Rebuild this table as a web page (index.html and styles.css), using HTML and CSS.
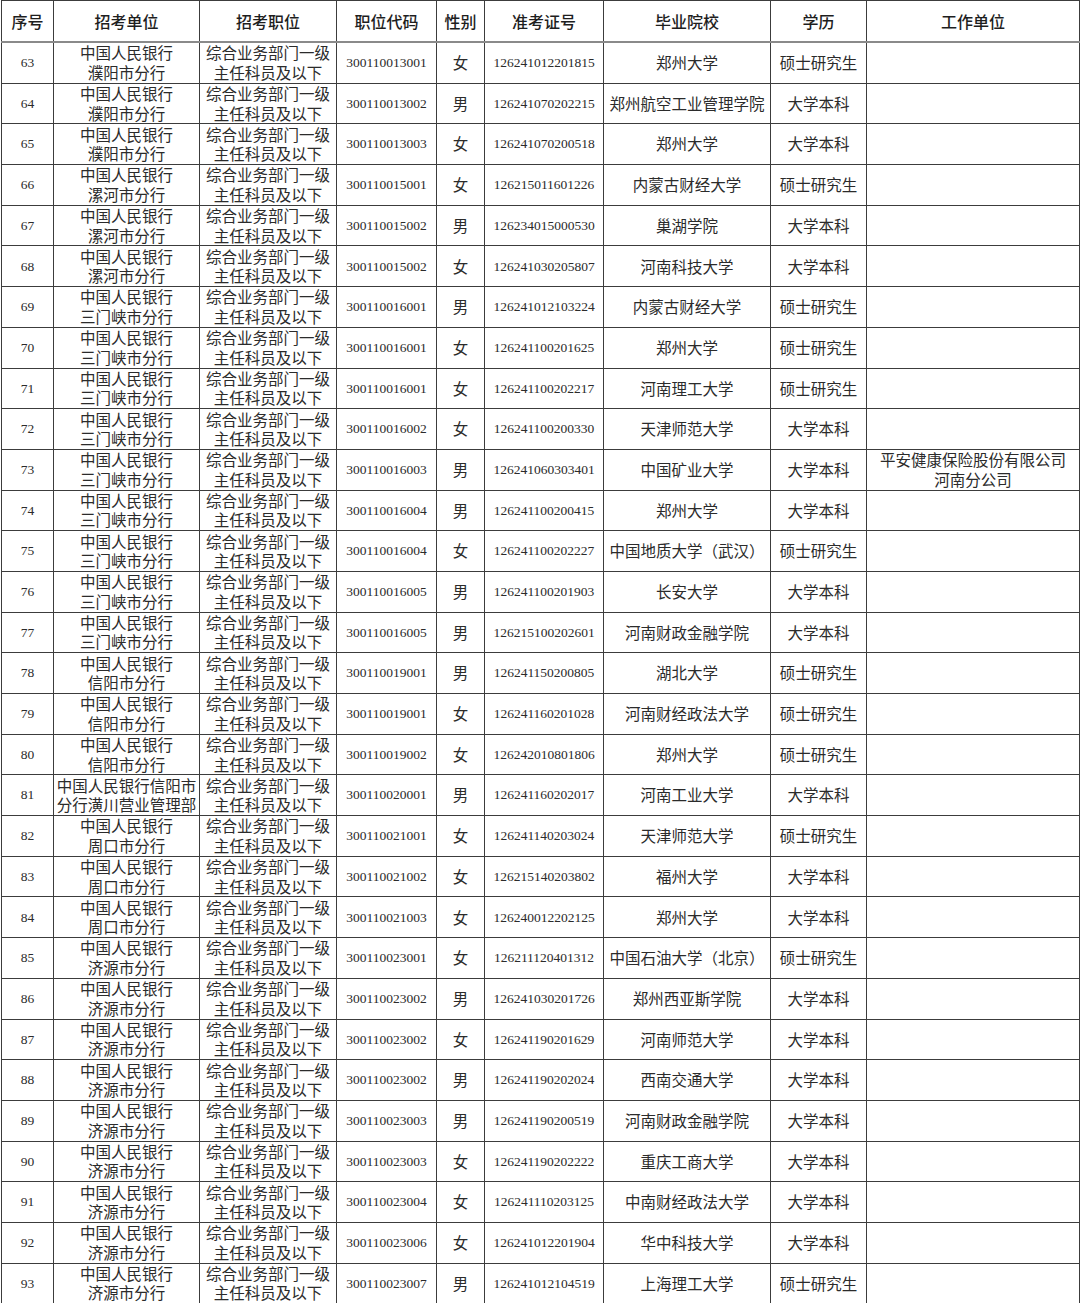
FILE: index.html
```html
<!DOCTYPE html>
<html lang="zh-CN">
<head>
<meta charset="utf-8">
<title>名单</title>
<link rel="stylesheet" href="styles.css">
</head>
<body>
<table class="list">
<colgroup>
<col class="c1"><col class="c2"><col class="c3"><col class="c4"><col class="c5"><col class="c6"><col class="c7"><col class="c8"><col class="c9">
</colgroup>
<thead>
<tr><th>序号</th><th>招考单位</th><th>招考职位</th><th>职位代码</th><th>性别</th><th>准考证号</th><th>毕业院校</th><th>学历</th><th>工作单位</th></tr>
</thead>
<tbody>
<tr><td class="n">63</td><td>中国人民银行<br>濮阳市分行</td><td>综合业务部门一级<br>主任科员及以下</td><td class="n">300110013001</td><td>女</td><td class="n">126241012201815</td><td>郑州大学</td><td>硕士研究生</td><td></td></tr>
<tr><td class="n">64</td><td>中国人民银行<br>濮阳市分行</td><td>综合业务部门一级<br>主任科员及以下</td><td class="n">300110013002</td><td>男</td><td class="n">126241070202215</td><td>郑州航空工业管理学院</td><td>大学本科</td><td></td></tr>
<tr><td class="n">65</td><td>中国人民银行<br>濮阳市分行</td><td>综合业务部门一级<br>主任科员及以下</td><td class="n">300110013003</td><td>女</td><td class="n">126241070200518</td><td>郑州大学</td><td>大学本科</td><td></td></tr>
<tr><td class="n">66</td><td>中国人民银行<br>漯河市分行</td><td>综合业务部门一级<br>主任科员及以下</td><td class="n">300110015001</td><td>女</td><td class="n">126215011601226</td><td>内蒙古财经大学</td><td>硕士研究生</td><td></td></tr>
<tr><td class="n">67</td><td>中国人民银行<br>漯河市分行</td><td>综合业务部门一级<br>主任科员及以下</td><td class="n">300110015002</td><td>男</td><td class="n">126234015000530</td><td>巢湖学院</td><td>大学本科</td><td></td></tr>
<tr><td class="n">68</td><td>中国人民银行<br>漯河市分行</td><td>综合业务部门一级<br>主任科员及以下</td><td class="n">300110015002</td><td>女</td><td class="n">126241030205807</td><td>河南科技大学</td><td>大学本科</td><td></td></tr>
<tr><td class="n">69</td><td>中国人民银行<br>三门峡市分行</td><td>综合业务部门一级<br>主任科员及以下</td><td class="n">300110016001</td><td>男</td><td class="n">126241012103224</td><td>内蒙古财经大学</td><td>硕士研究生</td><td></td></tr>
<tr><td class="n">70</td><td>中国人民银行<br>三门峡市分行</td><td>综合业务部门一级<br>主任科员及以下</td><td class="n">300110016001</td><td>女</td><td class="n">126241100201625</td><td>郑州大学</td><td>硕士研究生</td><td></td></tr>
<tr><td class="n">71</td><td>中国人民银行<br>三门峡市分行</td><td>综合业务部门一级<br>主任科员及以下</td><td class="n">300110016001</td><td>女</td><td class="n">126241100202217</td><td>河南理工大学</td><td>硕士研究生</td><td></td></tr>
<tr><td class="n">72</td><td>中国人民银行<br>三门峡市分行</td><td>综合业务部门一级<br>主任科员及以下</td><td class="n">300110016002</td><td>女</td><td class="n">126241100200330</td><td>天津师范大学</td><td>大学本科</td><td></td></tr>
<tr><td class="n">73</td><td>中国人民银行<br>三门峡市分行</td><td>综合业务部门一级<br>主任科员及以下</td><td class="n">300110016003</td><td>男</td><td class="n">126241060303401</td><td>中国矿业大学</td><td>大学本科</td><td>平安健康保险股份有限公司<br>河南分公司</td></tr>
<tr><td class="n">74</td><td>中国人民银行<br>三门峡市分行</td><td>综合业务部门一级<br>主任科员及以下</td><td class="n">300110016004</td><td>男</td><td class="n">126241100200415</td><td>郑州大学</td><td>大学本科</td><td></td></tr>
<tr><td class="n">75</td><td>中国人民银行<br>三门峡市分行</td><td>综合业务部门一级<br>主任科员及以下</td><td class="n">300110016004</td><td>女</td><td class="n">126241100202227</td><td>中国地质大学（武汉）</td><td>硕士研究生</td><td></td></tr>
<tr><td class="n">76</td><td>中国人民银行<br>三门峡市分行</td><td>综合业务部门一级<br>主任科员及以下</td><td class="n">300110016005</td><td>男</td><td class="n">126241100201903</td><td>长安大学</td><td>大学本科</td><td></td></tr>
<tr><td class="n">77</td><td>中国人民银行<br>三门峡市分行</td><td>综合业务部门一级<br>主任科员及以下</td><td class="n">300110016005</td><td>男</td><td class="n">126215100202601</td><td>河南财政金融学院</td><td>大学本科</td><td></td></tr>
<tr><td class="n">78</td><td>中国人民银行<br>信阳市分行</td><td>综合业务部门一级<br>主任科员及以下</td><td class="n">300110019001</td><td>男</td><td class="n">126241150200805</td><td>湖北大学</td><td>硕士研究生</td><td></td></tr>
<tr><td class="n">79</td><td>中国人民银行<br>信阳市分行</td><td>综合业务部门一级<br>主任科员及以下</td><td class="n">300110019001</td><td>女</td><td class="n">126241160201028</td><td>河南财经政法大学</td><td>硕士研究生</td><td></td></tr>
<tr><td class="n">80</td><td>中国人民银行<br>信阳市分行</td><td>综合业务部门一级<br>主任科员及以下</td><td class="n">300110019002</td><td>女</td><td class="n">126242010801806</td><td>郑州大学</td><td>硕士研究生</td><td></td></tr>
<tr><td class="n">81</td><td>中国人民银行信阳市<br>分行潢川营业管理部</td><td>综合业务部门一级<br>主任科员及以下</td><td class="n">300110020001</td><td>男</td><td class="n">126241160202017</td><td>河南工业大学</td><td>大学本科</td><td></td></tr>
<tr><td class="n">82</td><td>中国人民银行<br>周口市分行</td><td>综合业务部门一级<br>主任科员及以下</td><td class="n">300110021001</td><td>女</td><td class="n">126241140203024</td><td>天津师范大学</td><td>硕士研究生</td><td></td></tr>
<tr><td class="n">83</td><td>中国人民银行<br>周口市分行</td><td>综合业务部门一级<br>主任科员及以下</td><td class="n">300110021002</td><td>女</td><td class="n">126215140203802</td><td>福州大学</td><td>大学本科</td><td></td></tr>
<tr><td class="n">84</td><td>中国人民银行<br>周口市分行</td><td>综合业务部门一级<br>主任科员及以下</td><td class="n">300110021003</td><td>女</td><td class="n">126240012202125</td><td>郑州大学</td><td>大学本科</td><td></td></tr>
<tr><td class="n">85</td><td>中国人民银行<br>济源市分行</td><td>综合业务部门一级<br>主任科员及以下</td><td class="n">300110023001</td><td>女</td><td class="n">126211120401312</td><td>中国石油大学（北京）</td><td>硕士研究生</td><td></td></tr>
<tr><td class="n">86</td><td>中国人民银行<br>济源市分行</td><td>综合业务部门一级<br>主任科员及以下</td><td class="n">300110023002</td><td>男</td><td class="n">126241030201726</td><td>郑州西亚斯学院</td><td>大学本科</td><td></td></tr>
<tr><td class="n">87</td><td>中国人民银行<br>济源市分行</td><td>综合业务部门一级<br>主任科员及以下</td><td class="n">300110023002</td><td>女</td><td class="n">126241190201629</td><td>河南师范大学</td><td>大学本科</td><td></td></tr>
<tr><td class="n">88</td><td>中国人民银行<br>济源市分行</td><td>综合业务部门一级<br>主任科员及以下</td><td class="n">300110023002</td><td>男</td><td class="n">126241190202024</td><td>西南交通大学</td><td>大学本科</td><td></td></tr>
<tr><td class="n">89</td><td>中国人民银行<br>济源市分行</td><td>综合业务部门一级<br>主任科员及以下</td><td class="n">300110023003</td><td>男</td><td class="n">126241190200519</td><td>河南财政金融学院</td><td>大学本科</td><td></td></tr>
<tr><td class="n">90</td><td>中国人民银行<br>济源市分行</td><td>综合业务部门一级<br>主任科员及以下</td><td class="n">300110023003</td><td>女</td><td class="n">126241190202222</td><td>重庆工商大学</td><td>大学本科</td><td></td></tr>
<tr><td class="n">91</td><td>中国人民银行<br>济源市分行</td><td>综合业务部门一级<br>主任科员及以下</td><td class="n">300110023004</td><td>女</td><td class="n">126241110203125</td><td>中南财经政法大学</td><td>大学本科</td><td></td></tr>
<tr><td class="n">92</td><td>中国人民银行<br>济源市分行</td><td>综合业务部门一级<br>主任科员及以下</td><td class="n">300110023006</td><td>女</td><td class="n">126241012201904</td><td>华中科技大学</td><td>大学本科</td><td></td></tr>
<tr><td class="n">93</td><td>中国人民银行<br>济源市分行</td><td>综合业务部门一级<br>主任科员及以下</td><td class="n">300110023007</td><td>男</td><td class="n">126241012104519</td><td>上海理工大学</td><td>硕士研究生</td><td></td></tr>
</tbody>
</table>
</body>
</html>
```
FILE: styles.css
```css
html, body {
  margin: 0;
  padding: 0;
  background: #ffffff;
}
body {
  font-family: "Noto Sans CJK SC", "Noto Sans", sans-serif;
  color: #2b2b2b;
}
.list {
  margin: 0 0 0 1px;
  width: 1078px;
  table-layout: fixed;
  border-collapse: collapse;
}
.c1 { width: 52px; }
.c2 { width: 146px; }
.c3 { width: 137px; }
.c4 { width: 100px; }
.c5 { width: 48px; }
.c6 { width: 119px; }
.c7 { width: 167px; }
.c8 { width: 96px; }
.c9 { width: 213px; }
.list th,
.list td {
  border: 1px solid #3c3c3c;
  padding: 0;
  text-align: center;
  vertical-align: middle;
  white-space: nowrap;
  overflow: hidden;
}
.list th {
  height: 40px;
  font-size: 16px;
  font-weight: 500;
  color: #1e1e1e;
  line-height: 20px;
  border-bottom: 2px solid #8a8a8a;
}
.list td {
  height: 39.7px;
  font-size: 15.5px;
  line-height: 19.5px;
  font-weight: 400;
}
.list td.n {
  font-family: "Liberation Serif", "Times New Roman", serif;
  font-size: 13.5px;
}
```
